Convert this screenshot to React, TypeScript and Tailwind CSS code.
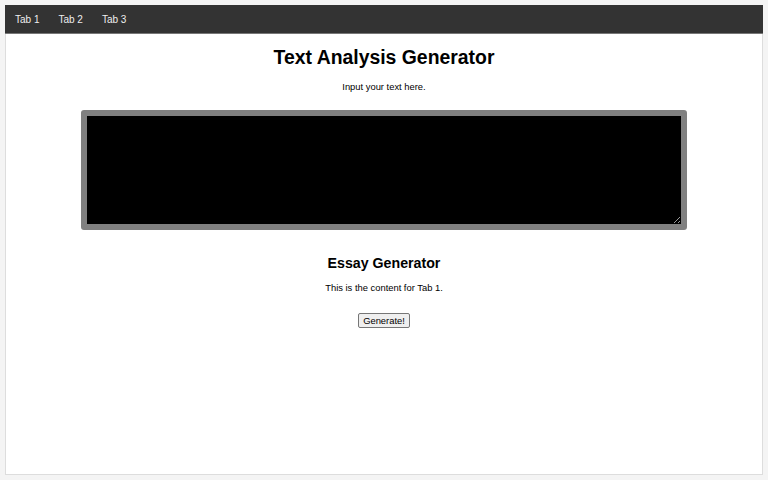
import React from "react";

export default function App() {
  return (
    <div className="min-h-screen bg-[#f4f4f4] p-[5px]" style={{ fontFamily: '"Liberation Sans", Arial, sans-serif' }}>
      <div className="h-[470px] bg-white border border-[#dddddd] flex flex-col">
        <nav className="h-[29px] bg-[#333333] border-b border-[#777777] flex items-center pl-[4px] -mx-px -mt-px">
          <span className="text-[10px] text-[#eeeeee] px-[6px]">Tab 1</span>
          <span className="text-[10px] text-[#eeeeee] px-[6px] ml-[7px]">Tab 2</span>
          <span className="text-[10px] text-[#eeeeee] px-[6px] ml-[7px]">Tab 3</span>
        </nav>
        <div className="flex flex-col items-center">
          <h1 className="text-[19.4px] font-bold text-black mt-[11px] leading-[24px]">Text Analysis Generator</h1>
          <p className="text-[9.4px] text-black mt-[12px] leading-[12px]">Input your text here.</p>
          <textarea className="mt-[17px] w-[606px] h-[120px] bg-black border-[6px] border-[#808080] rounded-[3px] block" />
          <h2 className="text-[14.2px] font-bold text-black mt-[24px] leading-[18px]">Essay Generator</h2>
          <p className="text-[9.4px] text-black mt-[10px] leading-[12px]">This is the content for Tab 1.</p>
          <button className="mt-[19px] text-[9.4px] text-black bg-[#efefef] border border-[#767676] rounded-[2px] px-[4px] h-[15px] leading-[12px]">Generate!</button>
        </div>
      </div>
    </div>
  );
}
